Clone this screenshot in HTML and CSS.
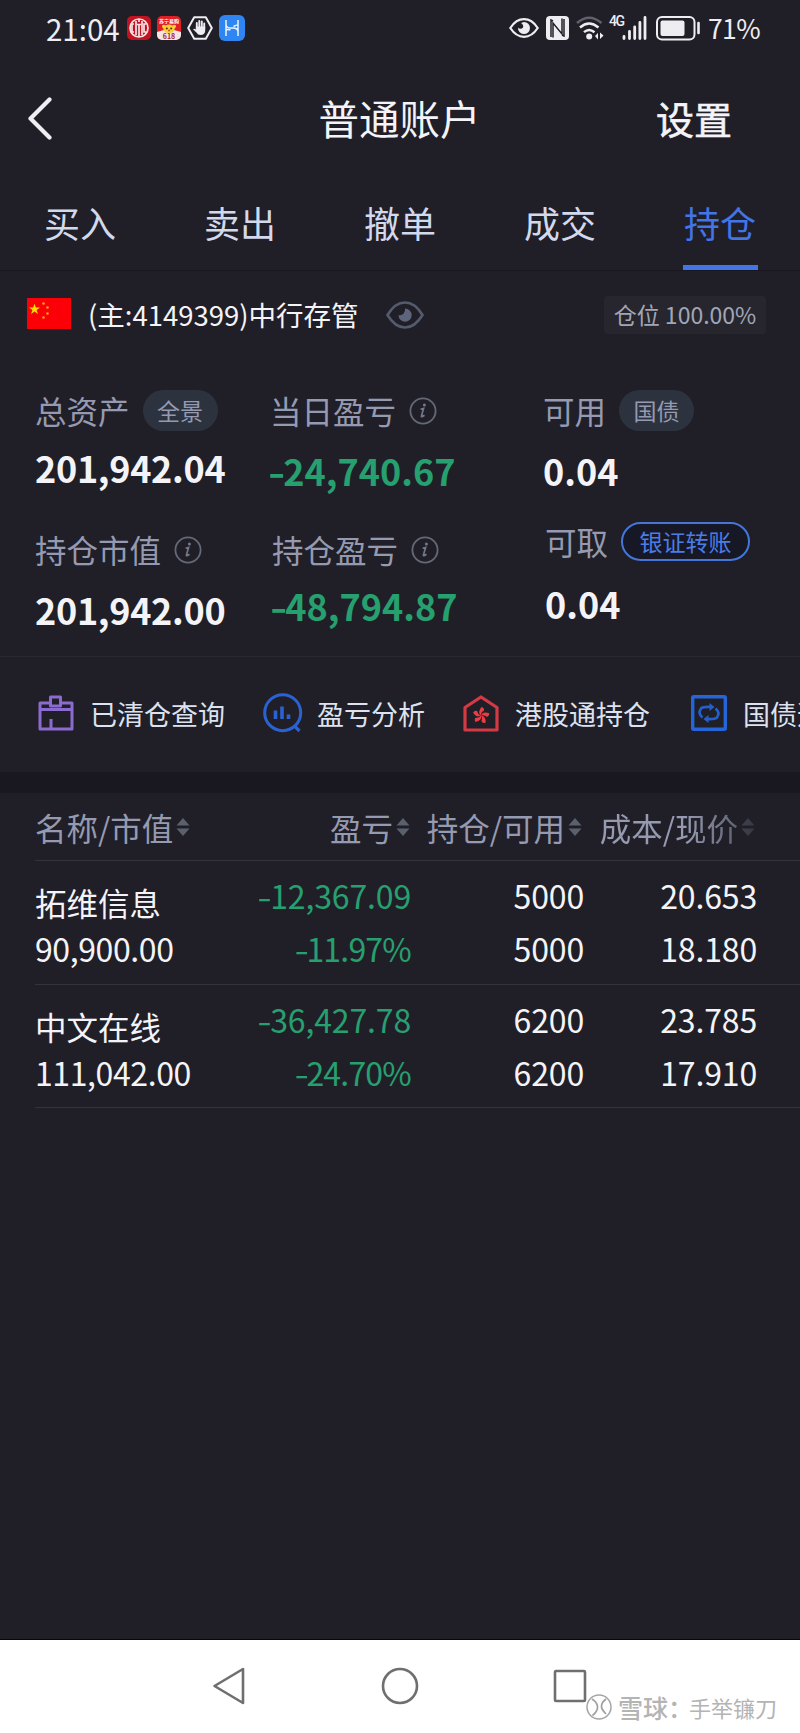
FILE: index.html
```html
<!DOCTYPE html>
<html lang="zh-CN">
<head>
  <meta charset="UTF-8">
  <meta name="viewport" content="width=device-width, initial-scale=1">
  <title>普通账户</title>
  <link rel="stylesheet" href="styles.css">
</head>
<body>
  <!-- shared icons -->
  <svg class="defs" width="0" height="0">
    <symbol id="info" viewBox="0 0 28 28">
      <circle cx="14" cy="14" r="12.6" fill="none" stroke="#646977" stroke-width="1.8"/>
      <circle cx="15.4" cy="7.9" r="1.5" fill="#737889"/>
      <path d="M11.6 12.3l3-.8-2.2 7.6q-.3 1.4 3.1-.8" fill="none" stroke="#737889" stroke-width="1.7"/>
    </symbol>
    <symbol id="sort" viewBox="0 0 14 18">
      <path d="M7 0l6.5 7.4H.5z M7 18l6.5-7.4H.5z" fill="#5b606d"/>
    </symbol>
  </svg>

  <div class="app">
    <!-- Status bar -->
    <div class="status-bar">
      <span class="time">21:04</span>
      <div class="status-apps">
        <svg width="24" height="24" viewBox="0 0 24 24">
          <rect width="24" height="24" rx="5" fill="#c41320"/>
          <circle cx="12" cy="12" r="9" fill="none" stroke="#f5e4e6" stroke-width="1.7"/>
          <path d="M7 8H5v8h2 M9 5v14 M12 9v12 M10 8.500h4 M12 3v3 M15 5v14 M19 8h-2v8h2" fill="none" stroke="#f5e4e6" stroke-width="1.700"/>
        </svg>
        <svg width="24" height="24" viewBox="0 0 24 24">
          <rect width="24" height="24" rx="5" fill="#e01f26"/>
          <path d="M0 16q12-5 24 0v3a5 5 0 0 1-5 5H5a5 5 0 0 1-5-5z" fill="#f3e6e2"/>
          <text x="12" y="6.500" text-anchor="middle" class="shop-name">苏宁易购</text>
          <path d="M5 9.500q2-1.500 3.500 0 3.500-2 7 0 1.500-1.500 3.500 0 .3 2-1.300 3-.5 4.500-5.700 4.500t-5.700-4.500Q4.700 11.500 5 9.500z" fill="#f8cf35"/>
          <circle cx="9.800" cy="12.500" r="1" fill="#5b2a10"/><circle cx="14.200" cy="12.500" r="1" fill="#5b2a10"/>
          <circle cx="12" cy="14.500" r=".9" fill="#b4471a"/>
          <text x="12" y="23" text-anchor="middle" class="shop-sale">618</text>
        </svg>
        <svg width="26" height="24" viewBox="0 0 26 24">
          <path d="M7.200 1.200h11.600L24.800 12l-6 10.800H7.200L1.200 12z" fill="none" stroke="#eeedf2" stroke-width="2" stroke-linejoin="round"/>
          <path d="M9.800 13V7 M12.300 12V5 M14.800 12V5.400 M17.200 13V7.500" stroke="#eeedf2" stroke-width="1.900" stroke-linecap="round"/>
          <path d="M8.900 10.500h9.300v4.500q-.5 4-4.500 4-3 0-4.300-2.500L6.200 13.400q.4-1.500 2.700 0z" fill="#eeedf2"/>
        </svg>
        <svg width="26" height="26" viewBox="0 0 26 26">
          <rect width="26" height="26" rx="6" fill="#2f86f3"/>
          <path d="M7 5v16 M19 5v16 M7 9.500q.5 4 6 3.500t6 3.500 M7 16q1-2.500 4.500-1M19 10q-1-.5-4.500 1.500" fill="none" stroke="#e9f3ff" stroke-width="1.500"/>
        </svg>
      </div>
      <div class="status-system">
        <svg class="s-eye" width="30" height="20" viewBox="0 0 30 20">
          <path d="M1.300 10Q7 1.200 15 1.200T28.700 10Q23 18.800 15 18.800T1.300 10z" fill="none" stroke="#eeedf2" stroke-width="2.200"/>
          <path d="M15 4a6 6 0 1 1-6 5.500 3 3 0 0 0 5 0Q15 7 12 5z" fill="#eeedf2"/>
        </svg>
        <svg class="s-nfc" width="23" height="24" viewBox="0 0 23 24">
          <rect width="23" height="24" rx="4" fill="#eeedf2"/>
          <path d="M7 21.500V7l9 11V2.500 M5 21V4l2 1 M18 3v17l-2-1" fill="none" stroke="#201f28" stroke-width="1.500"/>
        </svg>
        <svg class="s-wifi" width="29" height="24" viewBox="0 0 29 24">
          <g fill="none" stroke-width="2.400">
            <path d="M1 7q12-10.500 24.500 0" stroke="#62616b"/>
            <path d="M4 11.500q9-8 18.500 0 M8 16.200q5-4.500 10.500 0" stroke="#eeedf2"/>
          </g>
          <circle cx="13.200" cy="20.500" r="3" fill="#eeedf2"/>
          <path d="M22 17v6.500l-3-3.500z M24 23V16.500l3.500 3z" fill="#eeedf2"/>
        </svg>
        <span class="net">4G</span>
        <svg class="s-signal" width="25" height="24" viewBox="0 0 25 24">
          <path d="M2 20.500v2 M7.500 15.500v7 M12.700 11v11.500 M17.900 6.500v16 M23 1.500v21" stroke="#eeedf2" stroke-width="2.800" stroke-linecap="round"/>
        </svg>
        <svg class="s-battery" width="45" height="25" viewBox="0 0 45 25">
          <rect x="1" y="1" width="37.500" height="22.500" rx="5" fill="none" stroke="#eeedf2" stroke-width="2"/>
          <rect x="4.500" y="4.500" width="24" height="15.500" rx="2" fill="#eeedf2"/>
          <path d="M42.500 7v10" stroke="#eeedf2" stroke-width="2.600" stroke-linecap="round"/>
        </svg>
        <span class="percent">71%</span>
      </div>
    </div>

    <!-- Title bar -->
    <div class="title-bar">
      <svg class="back" width="25" height="43" viewBox="0 0 25 43">
        <path d="M21.500 2.500L2.500 21.500l19 19" fill="none" stroke="#efeef3" stroke-width="4.200" stroke-linecap="round" stroke-linejoin="round"/>
      </svg>
      <h1>普通账户</h1>
      <span class="settings">设置</span>
    </div>

    <!-- Tabs -->
    <div class="tabs">
      <div class="tab">买入</div>
      <div class="tab">卖出</div>
      <div class="tab">撤单</div>
      <div class="tab">成交</div>
      <div class="tab active">持仓</div>
    </div>

    <!-- Account -->
    <div class="account">
      <svg class="flag" width="44" height="31" viewBox="0 0 44 31">
        <rect width="44" height="31" fill="#fb0007"/>
        <path d="M7.500 5.500l1.300 4h4.200l-3.400 2.500 1.300 4-3.400-2.500-3.400 2.500 1.300-4L2 9.500h4.200z" fill="#ffde00"/>
        <g fill="#ffb000"><circle cx="16.500" cy="5.500" r="1.300"/><circle cx="20.500" cy="9.500" r="1.300"/><circle cx="20.500" cy="15.500" r="1.300"/><circle cx="16.500" cy="19.500" r="1.300"/></g>
      </svg>
      <span class="account-name">(主:4149399)中行存管</span>
      <svg class="eye" width="38" height="28" viewBox="0 0 38 28">
        <path d="M1.500 14Q9 1.500 19 1.500T36.500 14Q29 26.500 19 26.500T1.500 14z" fill="none" stroke="#555b6e" stroke-width="2.600"/>
        <path d="M19 7.500a6.600 6.600 0 1 1-6.500 6.500q3 .8 5-1.200t1.500-5.300z" fill="#5d657c"/>
      </svg>
      <span class="position">仓位 100.00%</span>
    </div>

    <!-- Assets summary -->
    <div class="summary">
      <div class="column total">
        <div class="stat">
          <div class="label">总资产<span class="pill">全景</span></div>
          <div class="value">201,942.04</div>
        </div>
        <div class="stat">
          <div class="label">持仓市值<svg class="info"><use href="#info"/></svg></div>
          <div class="value">201,942.00</div>
        </div>
      </div>
      <div class="column profit">
        <div class="stat">
          <div class="label">当日盈亏<svg class="info"><use href="#info"/></svg></div>
          <div class="value green"><span class="minus">-</span>24,740.67</div>
        </div>
        <div class="stat">
          <div class="label">持仓盈亏<svg class="info"><use href="#info"/></svg></div>
          <div class="value green"><span class="minus">-</span>48,794.87</div>
        </div>
      </div>
      <div class="column cash">
        <div class="stat">
          <div class="label">可用<span class="pill">国债</span></div>
          <div class="value">0.04</div>
        </div>
        <div class="stat">
          <div class="label">可取<span class="pill outline">银证转账</span></div>
          <div class="value">0.04</div>
        </div>
      </div>
    </div>

    <!-- Shortcuts, scrolls off to the right -->
    <div class="shortcuts">
      <div class="shortcut cleared">
        <svg width="36" height="36" viewBox="0 0 36 36">
          <path d="M2 8h10.500V2h10v6H34v26H2z M2 14.500h32 M13 24v10 M12.500 8v3h10V8" fill="none" stroke="#8c6bd0" stroke-width="3" stroke-linejoin="round"/>
        </svg>
        <span>已清仓查询</span>
      </div>
      <div class="shortcut analysis">
        <svg width="40" height="40" viewBox="0 0 40 40">
          <circle cx="19.700" cy="19.700" r="18" fill="none" stroke="#2b62d2" stroke-width="3"/>
          <path d="M31 32.500l5.500 5.500" stroke="#2b62d2" stroke-width="3.200"/>
          <path d="M12.500 17.500v8.500 M19 13.500v12.500 M25.500 21.500v4.500" stroke="#2b62d2" stroke-width="3.600"/>
        </svg>
        <span>盈亏分析</span>
      </div>
      <div class="shortcut hk">
        <svg width="36" height="37" viewBox="0 0 36 37">
          <path d="M18 2L34 12.500V35H2V12.500z" fill="none" stroke="#d43a44" stroke-width="3.200" stroke-linejoin="round"/>
          <g fill="#ea3d43">
            <path id="petal" d="M18 20.500q-3.800-3.500.5-8.500 3 1 2.500 3.500-3 1.500-3 5z"/>
            <use href="#petal" transform="rotate(72 18 20.500)"/>
            <use href="#petal" transform="rotate(144 18 20.500)"/>
            <use href="#petal" transform="rotate(216 18 20.500)"/>
            <use href="#petal" transform="rotate(288 18 20.500)"/>
          </g>
        </svg>
        <span>港股通持仓</span>
      </div>
      <div class="shortcut bond">
        <svg width="36" height="36" viewBox="0 0 36 36">
          <rect x="1.700" y="1.700" width="32.600" height="32.600" rx="1" fill="none" stroke="#2466da" stroke-width="3.400"/>
          <path d="M11.500 22.500q-5-4-1.500-9Q12 11.500 20 12 M24.500 13.500q5 4 1.500 9Q24 24.500 16 24" fill="none" stroke="#2460cc" stroke-width="2.600"/>
          <path d="M18.500 8l5 4-5 4z M17.500 20l-5 4 5 4z" fill="#2460cc"/>
        </svg>
        <span>国债逆回购</span>
      </div>
    </div>

    <!-- Holdings -->
    <div class="holdings">
      <div class="row head">
        <div class="name">名称/市值<svg class="sort"><use href="#sort"/></svg></div>
        <div>盈亏<svg class="sort"><use href="#sort"/></svg></div>
        <div>持仓/可用<svg class="sort"><use href="#sort"/></svg></div>
        <div class="faded"><span>成本/现价</span><svg class="sort"><use href="#sort"/></svg></div>
      </div>
      <div class="row">
        <div class="name"><p class="stock">拓维信息</p><p>90,900.00</p></div>
        <div class="green"><p><span class="minus">-</span>12,367.09</p><p class="rate"><span class="minus">-</span>11.97%</p></div>
        <div><p>5000</p><p>5000</p></div>
        <div><p>20.653</p><p>18.180</p></div>
      </div>
      <div class="row">
        <div class="name"><p class="stock">中文在线</p><p>111,042.00</p></div>
        <div class="green"><p><span class="minus">-</span>36,427.78</p><p class="rate"><span class="minus">-</span>24.70%</p></div>
        <div><p>6200</p><p>6200</p></div>
        <div><p>23.785</p><p>17.910</p></div>
      </div>
    </div>

    <!-- System navigation -->
    <div class="nav-bar">
      <svg width="36" height="40" viewBox="0 0 36 40">
        <path d="M32 3v34L3.500 20z" fill="none" stroke="#6f6f6f" stroke-width="2.600" stroke-linejoin="round"/>
      </svg>
      <svg width="40" height="40" viewBox="0 0 40 40">
        <circle cx="20" cy="20" r="17" fill="none" stroke="#6f6f6f" stroke-width="2.600"/>
      </svg>
      <svg width="36" height="40" viewBox="0 0 36 40">
        <rect x="2" y="5" width="30" height="30" rx="1" fill="none" stroke="#6f6f6f" stroke-width="2.600"/>
      </svg>
      <div class="watermark">
        <svg width="28" height="28" viewBox="0 0 28 28">
          <circle cx="14" cy="14" r="12" fill="#fff" stroke="#a5a5a5" stroke-width="1.500"/>
          <path d="M7 6q5 3 5.500 7.500t-5 9 M21 6q-4 3-4.500 6.500T21 21" fill="none" stroke="#a0a0a0" stroke-width="1.700"/>
        </svg>
        <b>雪球：</b><span>手举镰刀</span>
      </div>
    </div>
  </div>
</body>
</html>
```
FILE: styles.css
```css
* {
  margin: 0;
  padding: 0;
  box-sizing: border-box;
}
body {
  background: #201f28;
  color: #f4f4f8;
  font-family: "Noto Sans CJK SC", sans-serif;
  overflow: hidden;
}
svg {
  display: block;
  flex: none;
}
.defs {
  position: absolute;
}
.app {
  width: 800px;
  height: 1733px;
  display: flex;
  flex-direction: column;
  overflow: hidden;
  white-space: nowrap;
}

/* Status bar */
.status-bar {
  height: 60px;
  padding: 0 42px 4px 46px;
  display: flex;
  align-items: center;
  color: #eeedf2;
}
.time {
  width: 81px;
  font-size: 29.5px;
  line-height: 56px;
}
.status-apps {
  display: flex;
  align-items: center;
  gap: 6px;
}
.shop-name {
  font-size: 5px;
  font-weight: bold;
  fill: #fff;
}
.shop-sale {
  font-size: 7px;
  font-weight: bold;
  fill: #b02030;
}
.status-system {
  margin-left: auto;
  display: flex;
  align-items: center;
}
.s-nfc {
  margin-left: 7px;
}
.s-wifi {
  margin-left: 7px;
}
.net {
  margin: 0 0 14px 4px;
  width: 13px;
  font-family: Roboto, sans-serif;
  font-size: 14px;
  line-height: 15px;
  letter-spacing: -1.5px;
  font-weight: 500;
}
.s-battery {
  margin: 0 7px 0 9px;
}
.percent {
  font-size: 26.5px;
  line-height: 58px;
  letter-spacing: -0.6px;
  width: 50px;
}

/* Title bar */
.title-bar {
  height: 116px;
  padding: 0 68px 0 28px;
  display: grid;
  grid-template-columns: 1fr auto 1fr;
  align-items: center;
}
.title-bar h1 {
  padding-left: 39px;
  font-size: 40.5px;
  font-weight: normal;
  line-height: 112px;
}
.settings {
  justify-self: end;
  font-size: 38px;
  line-height: 112px;
  -webkit-text-stroke: 0.6px #f4f4f8;
}

/* Tabs */
.tabs {
  height: 95px;
  display: grid;
  grid-template-columns: repeat(5, 1fr);
  justify-items: center;
  border-bottom: 1px solid #191820;
}
.tab {
  width: 75px;
  height: 94px;
  font-size: 36px;
  line-height: 92px;
  text-align: center;
  color: #d3d9ec;
}
.tab.active {
  color: #4275e8;
  border-bottom: 5px solid #4275e8;
}

/* Account */
.account {
  height: 87px;
  padding: 0 34px 3px 27px;
  display: flex;
  align-items: center;
}
.account-name {
  margin: 1px 27px 0 17px;
  font-size: 27.5px;
}
.eye {
  margin-top: 4px;
}
.position {
  margin: 3px 0 0 auto;
  width: 162px;
  height: 38px;
  border-radius: 4px;
  background: #27262f;
  color: #a2a6b6;
  font-size: 23px;
  line-height: 37px;
  text-align: center;
}

/* Assets summary */
.summary {
  height: 299px;
  padding: 32px 0 0 35px;
  display: grid;
  grid-template-columns: 235px 273px 1fr;
  border-bottom: 1px solid #292831;
}
.label {
  height: 41px;
  display: flex;
  align-items: center;
  font-size: 31.5px;
  line-height: 41px;
  color: #959ab1;
}
.pill {
  margin-left: 13px;
  width: 75px;
  height: 41px;
  border-radius: 21px;
  background: #2c333f;
  font-size: 23px;
  line-height: 41px;
  text-align: center;
}
.outline {
  width: 129px;
  height: 39px;
  border: 2px solid #4576d8;
  background: #171826;
  color: #4b7de6;
  line-height: 34px;
}
.info {
  width: 28px;
  height: 28px;
  margin-left: 13px;
}
.value {
  margin-top: 15px;
  font-size: 36px;
  font-weight: bold;
  line-height: 48px;
}
.stat + .stat {
  margin-top: 35px;
}
.total .value {
  margin-top: 12px;
  letter-spacing: -0.3px;
}
.total .stat + .stat {
  margin-top: 38px;
}
.total .stat + .stat .value {
  margin-top: 15px;
}
.profit .stat + .stat {
  padding-left: 2px;
}
.profit .stat + .stat .value {
  margin-top: 11px;
}
.cash .stat + .stat {
  margin-top: 27px;
  padding-left: 2px;
}
.cash .stat + .stat .value {
  margin-top: 17px;
}
.green {
  color: #27a06f;
}
.minus {
  display: inline-block;
  transform: scaleX(1.3);
}

/* Shortcuts */
.shortcuts {
  height: 115px;
  padding: 0 0 3px 38px;
  display: flex;
  align-items: center;
  font-size: 27px;
  color: #dde2f0;
  overflow: hidden;
}
.shortcut {
  display: flex;
  align-items: center;
  flex: none;
  gap: 16px;
}
.cleared {
  width: 225px;
}
.analysis {
  width: 200px;
  gap: 14px;
}
.hk {
  width: 228px;
}

/* Holdings */
.holdings {
  flex: 1;
  border-top: 21px solid #191821;
  padding-left: 35px;
}
.row {
  height: 123.5px;
  padding-top: 8px;
  display: grid;
  grid-template-columns: 190px 186px 173px 173px;
  border-bottom: 1px solid #34333d;
  font-size: 32px;
  line-height: 53px;
  letter-spacing: -0.15px;
  text-align: right;
}
.row .name {
  text-align: left;
  letter-spacing: -0.4px;
}
.row .stock {
  position: relative;
  top: 7px;
  font-size: 31.5px;
  letter-spacing: 0;
}
.row .rate {
  letter-spacing: -0.8px;
}
.row.head {
  height: 68px;
  padding-top: 0;
  grid-template-columns: 190px 185px 172px 173px;
  font-size: 31.5px;
  line-height: 64px;
  letter-spacing: 0;
  color: #959ab1;
}
.head > div {
  display: flex;
  align-items: center;
  justify-content: flex-end;
}
.head > .name {
  justify-content: flex-start;
  letter-spacing: 0;
}
.sort {
  width: 14px;
  height: 18px;
  margin-left: 3px;
}
.faded {
  -webkit-mask-image: linear-gradient(90deg, #000 60%, rgba(0, 0, 0, 0.4));
  mask-image: linear-gradient(90deg, #000 60%, rgba(0, 0, 0, 0.4));
}

/* System navigation */
.nav-bar {
  position: relative;
  height: 94px;
  padding: 26px 211px 0;
  display: flex;
  justify-content: space-between;
  background: #fff;
  border-top: 1px solid #09080d;
}
.watermark {
  position: absolute;
  left: 585px;
  top: 49px;
  height: 36px;
  display: flex;
  align-items: center;
  color: #b4b4b4;
  font-size: 22px;
}
.watermark b {
  width: 71px;
  margin-left: 5px;
  font-size: 25px;
  font-weight: 500;
}
```
